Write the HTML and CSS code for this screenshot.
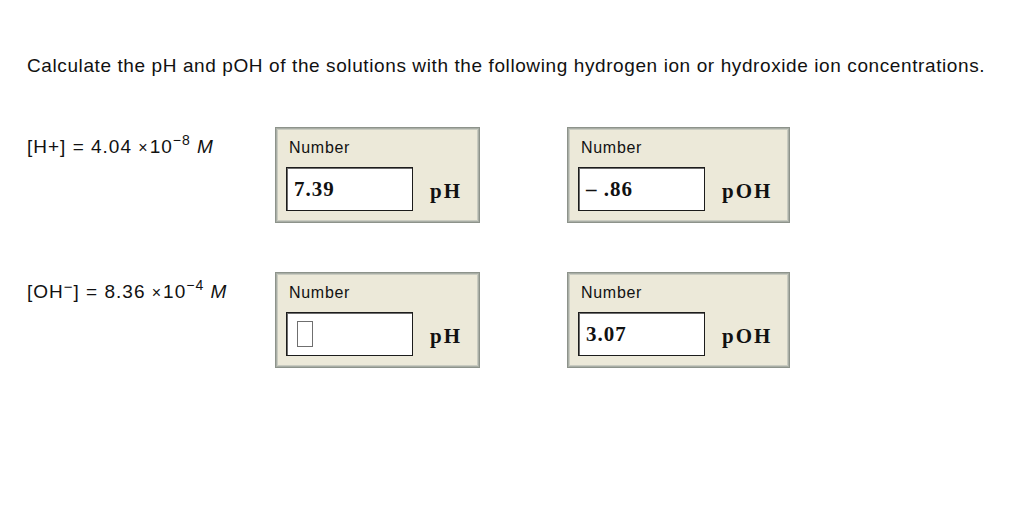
FILE: index.html
```html
<!DOCTYPE html>
<html>
<head>
	<title>pH and pOH</title>
	<link rel="stylesheet" href="styles.css">
</head>
<body>
	<div class="page">
		<p class="prompt">Calculate the pH and pOH of the solutions with the following hydrogen ion or hydroxide ion concentrations.</p>

		<div class="problem">
			<div class="conc">[H+] = 4.04 <span class="times">×</span>10<sup>−8</sup> <i>M</i></div>
			<div class="answer">
				<label>Number</label>
				<div class="answer-row">
					<div class="field">7.39</div>
					<span class="unit">pH</span>
				</div>
			</div>
			<div class="answer">
				<label>Number</label>
				<div class="answer-row">
					<div class="field">– .86</div>
					<span class="unit">pOH</span>
				</div>
			</div>
		</div>

		<div class="problem">
			<div class="conc">[OH<sup class="ion">−</sup>] = 8.36 <span class="times">×</span>10<sup>−4</sup> <i>M</i></div>
			<div class="answer">
				<label>Number</label>
				<div class="answer-row">
					<div class="field"><span class="caret"></span></div>
					<span class="unit">pH</span>
				</div>
			</div>
			<div class="answer">
				<label>Number</label>
				<div class="answer-row">
					<div class="field">3.07</div>
					<span class="unit">pOH</span>
				</div>
			</div>
		</div>
	</div>
</body>
</html>
```

FILE: styles.css
```css
body {
	margin: 0;
	background-color: #fff;
	font-family: Arial, "Liberation Sans", sans-serif;
	color: #111;
}

.page {
	padding: 55px 0 0 27px;
}

.prompt {
	margin: 0 0 51px;
	font-size: 19px;
	line-height: 21px;
	letter-spacing: 0.6px;
}

.problem {
	display: grid;
	grid-template-columns: 248px 292px auto;
	align-items: start;
	margin-bottom: 49px;
}

.conc {
	margin-top: 9px;
	font-size: 19px;
	line-height: 21px;
	letter-spacing: 1px;
}

.conc sup {
	font-size: 14px;
	position: relative;
	top: -1px;
	vertical-align: super;
	line-height: 0;
}

.conc sup.ion {
	font-size: 15px;
	top: 1px;
}

.conc .times {
	font-size: 16px;
	margin-right: 1px;
}

.answer {
	display: inline-block;
	justify-self: start;
	background-color: #ece9d9;
	border: 1px solid #8d938b;
	box-shadow: inset 0 0 0 1px #a9aea6, inset 0 0 0 2px #c9cbc0;
	padding: 11px 17px 11px 10px;
}

.answer label {
	display: block;
	font-size: 16px;
	line-height: 18px;
	letter-spacing: 0.7px;
	margin: 0 0 10px 3px;
}

.answer-row {
	display: flex;
	align-items: center;
}

.field {
	box-sizing: border-box;
	width: 127px;
	height: 44px;
	background-color: #fff;
	border: 1px solid #1c1c1c;
	box-shadow: inset 1px 1px 0 #6c6c6c;
	padding: 0 0 0 7px;
	display: flex;
	align-items: center;
	font-family: "Liberation Serif", "Times New Roman", serif;
	font-weight: bold;
	font-size: 21px;
	letter-spacing: 1px;
}

.caret {
	display: block;
	width: 16px;
	height: 26px;
	box-sizing: border-box;
	border: 1px solid #6f6f6f;
	margin-left: 3px;
}

.unit {
	margin-left: 17px;
	margin-top: 4px;
	font-family: "Liberation Serif", "Times New Roman", serif;
	font-weight: bold;
	font-size: 21px;
	letter-spacing: 2px;
}
```
